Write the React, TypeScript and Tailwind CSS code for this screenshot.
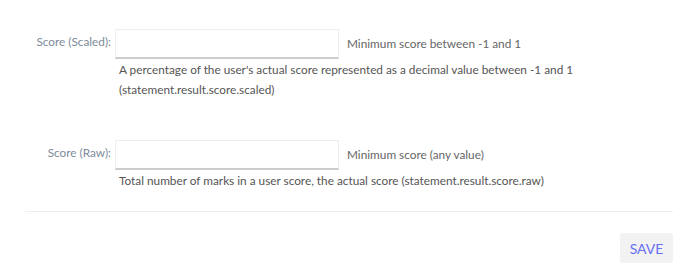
import React from "react";

function Row({ label, help, desc }: { label: string; help: string; desc: React.ReactNode }) {
  return (
    <div className="flex">
      <div className="w-[86px] shrink-0 text-right text-[11.8px] leading-[20px] pt-[3px] text-[#7d8b99]">{label}</div>
      <div className="ml-[4px] flex flex-col">
        <div className="flex items-center">
          <input className="w-[224px] h-[30px] bg-white border border-[#eeeeee] border-b-2 border-b-[#cccccc] outline-none" />
          <span className="ml-[8px] text-[11.8px] leading-[20px] text-[#666666]">{help}</span>
        </div>
        <div className="mt-[1px] pl-[4px] text-[11.8px] leading-[20px] text-[#555555]">{desc}</div>
      </div>
    </div>
  );
}

export default function App() {
  return (
    <div className="w-[690px] h-[268px] bg-white" style={{ fontFamily: "Lato, 'Noto Sans', sans-serif" }}>
      <div className="pt-[29px] pl-[25px] pr-[17px]">
        <Row
          label="Score (Scaled):"
          help="Minimum score between -1 and 1"
          desc={
            <>
              A percentage of the user's actual score represented as a decimal value between -1 and 1
              <br />
              (statement.result.score.scaled)
            </>
          }
        />
        <div className="h-[40px]" />
        <Row
          label="Score (Raw):"
          help="Minimum score (any value)"
          desc="Total number of marks in a user score, the actual score (statement.result.score.raw)"
        />
        <div className="mt-[20px] border-t border-[#eeeeee]" />
        <div className="flex justify-end mt-[21px]">
          <button className="w-[53px] h-[30px] rounded-[2px] bg-[#f2f2f2] text-[14px] text-[#6670f2]">SAVE</button>
        </div>
      </div>
    </div>
  );
}
